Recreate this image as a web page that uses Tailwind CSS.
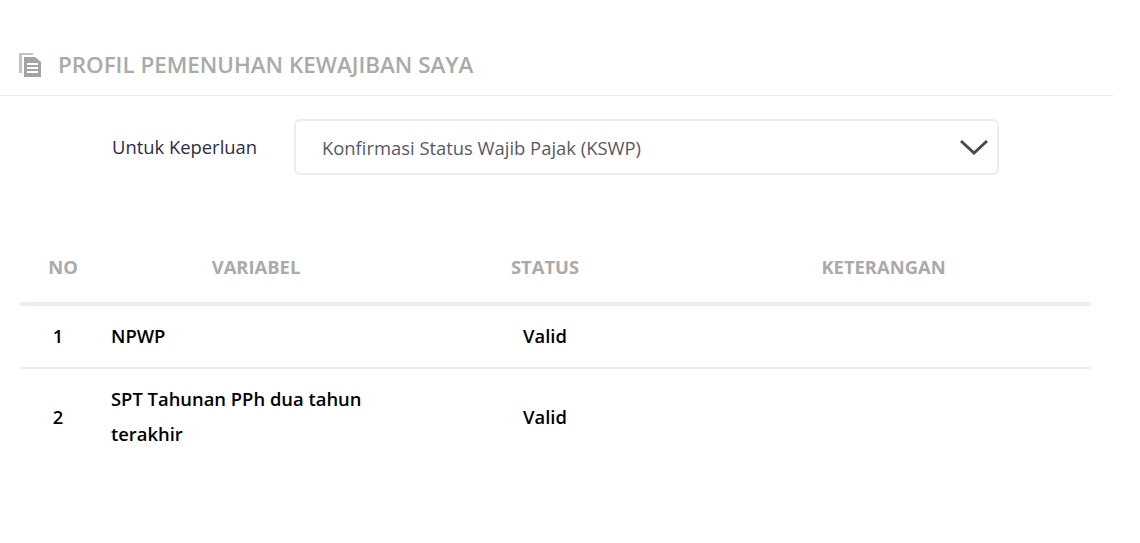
<!DOCTYPE html>
<html lang="en">
<head>
    <meta charset="UTF-8">
    <title>Profil Pemenuhan Kewajiban Saya</title>
    <script src="https://cdn.jsdelivr.net/npm/@tailwindcss/browser@4"></script>
</head>
<body class="bg-white font-['Open_Sans',sans-serif] h-[543px] overflow-hidden">
    <div class="w-[1113px]">
        <!-- Page title -->
        <div class="h-[96px] pl-[19px] pt-[50px] border-b border-[#ebedf2]">
            <div class="flex items-center h-[30px]">
                <svg class="w-[22px] h-[24px]" viewBox="0 0 22 24">
                    <path fill="#c4c4c4" d="M0 0h14v2H3v18H0z"/>
                    <path fill="#a3a3a3" fill-rule="evenodd" d="M5 4h11l6 5v15H5zm3 6v2h11v-2zm0 4v2h11v-2zm0 4v2h11v-2z"/>
                </svg>
                <h3 class="ml-[17px] text-[22.4px] font-semibold text-[#aaaaaa] leading-[30px]">PROFIL PEMENUHAN KEWAJIBAN SAYA</h3>
            </div>
        </div>

        <!-- Form row -->
        <div class="flex items-center mt-[23px] pl-[112px]">
            <label class="w-[182px] text-[18.4px] text-[#2c2e3e]">Untuk Keperluan</label>
            <div class="w-[705px] h-[56px] flex items-center justify-between pl-[26px] pr-[8px] border-2 border-[#ebedf2] rounded-[6px]">
                <span class="pt-[2px] text-[18.4px] text-[#575962]">Konfirmasi Status Wajib Pajak (KSWP)</span>
                <svg class="w-[30px] h-[18px] text-[#454a54]" viewBox="0 0 30 18" fill="none" stroke="currentColor" stroke-width="3">
                    <path d="M2 3l13 12L28 3"/>
                </svg>
            </div>
        </div>

        <!-- Table -->
        <table class="ml-[20px] mt-[61px] w-[1071px] table-fixed border-collapse">
            <thead>
                <tr class="h-[68px] border-b-[4px] border-[#ebedf2] text-[18.4px] font-bold text-[#aaaaaa]">
                    <th class="w-[86px] pb-[4px] text-center">NO</th>
                    <th class="w-[300px] pb-[4px] text-center">VARIABEL</th>
                    <th class="w-[278px] pb-[4px] text-center">STATUS</th>
                    <th class="pr-[8px] pb-[4px] text-center">KETERANGAN</th>
                </tr>
            </thead>
            <tbody class="text-[18.4px] font-semibold text-black">
                <tr class="h-[64px] border-b-2 border-[#ebedf2]">
                    <td class="pr-[10px] pb-[1px] text-center">1</td>
                    <td class="pl-[5px] pb-[1px]">NPWP</td>
                    <td class="pb-[1px] text-center">Valid</td>
                    <td></td>
                </tr>
                <tr class="h-[97px]">
                    <td class="pr-[10px] pb-[1px] text-center">2</td>
                    <td class="pl-[5px] pr-[30px] pb-[3px] leading-[35px]">SPT Tahunan PPh dua tahun terakhir</td>
                    <td class="pb-[1px] text-center">Valid</td>
                    <td></td>
                </tr>
            </tbody>
        </table>
    </div>
</body>
</html>
